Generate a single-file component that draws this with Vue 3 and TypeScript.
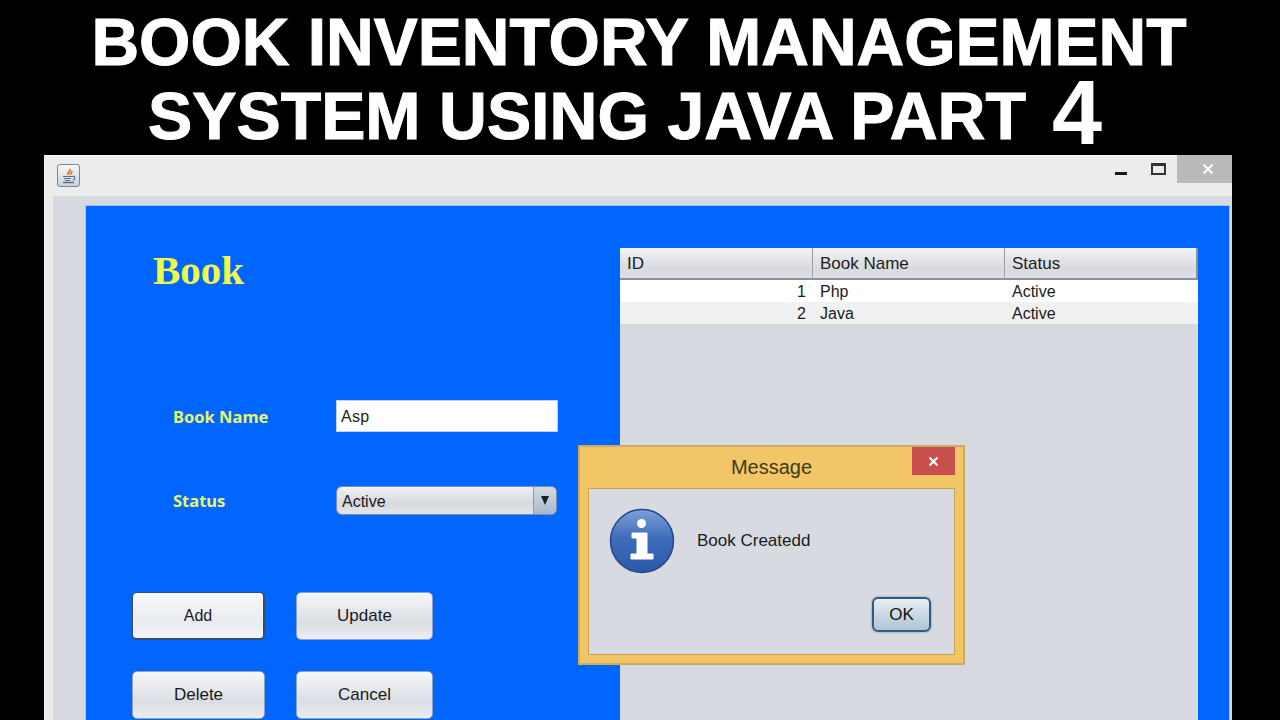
<script setup lang="ts">
const rows = [
  { id: 1, name: 'Php', status: 'Active' },
  { id: 2, name: 'Java', status: 'Active' },
]
const buttons = [
  { label: 'Add', cls: 'btn-focus' },
  { label: 'Update', cls: '' },
  { label: 'Delete', cls: '' },
  { label: 'Cancel', cls: '' },
]
</script>

<template>
  <div class="page">
    <header class="headline">
      <div class="line1">BOOK INVENTORY MANAGEMENT</div>
      <div class="line2"><span>SYSTEM USING JAVA PART</span><span class="four">4</span></div>
    </header>

    <section class="window">
      <div class="titlebar">
        <div class="appicon">
          <svg width="20" height="20" viewBox="0 0 20 20">
            <path d="M11 3c1 2-3 3-2 6 M13 5c0 2-2 2-1.5 4" fill="none" stroke="#e8761e" stroke-width="1.8" />
            <path d="M4 10.500h9 M5 12.500h7 M6 14.500h5" stroke="#5a6f8c" stroke-width="1.200" fill="none" />
            <path d="M13 10.500c3-1 4 2 1 4" stroke="#5a6f8c" stroke-width="1.200" fill="none" />
            <path d="M4 16.500h11" stroke="#5a6f8c" stroke-width="1.400" />
          </svg>
        </div>
        <div class="winctl">
          <span class="min"></span>
          <span class="max"></span>
          <span class="close">
            <svg width="12" height="12" viewBox="0 0 12 12"><path d="M1.500 1.500l9 9M10.500 1.500l-9 9" stroke="#fff" stroke-width="1.800" /></svg>
          </span>
        </div>
      </div>

      <div class="client">
        <div class="panel">
          <div class="form">
            <h1 class="title">Book</h1>
            <div class="field field-name">
              <label>Book Name</label>
              <div class="input">Asp</div>
            </div>
            <div class="field field-status">
              <label>Status</label>
              <div class="select">
                <span class="sel-val">Active</span>
                <span class="sel-btn"><i class="tri"></i></span>
              </div>
            </div>
            <div class="buttons">
              <button v-for="b in buttons" :key="b.label" class="btn" :class="b.cls">{{ b.label }}</button>
            </div>
          </div>

          <div class="tablewrap">
            <div class="thead">
              <div class="th">ID</div>
              <div class="th">Book Name</div>
              <div class="th">Status</div>
            </div>
            <div v-for="(r, i) in rows" :key="r.id" class="tr" :class="{ alt: i === 1 }">
              <div class="td num">{{ r.id }}</div>
              <div class="td">{{ r.name }}</div>
              <div class="td">{{ r.status }}</div>
            </div>
          </div>
        </div>
      </div>
    </section>

    <div class="dialog">
      <div class="dlg-title">
        <span class="dlg-text">Message</span>
        <span class="dlg-close">
          <svg width="11" height="11" viewBox="0 0 11 11"><path d="M1.500 1.500l8 8M9.500 1.500l-8 8" stroke="#fff" stroke-width="1.900" /></svg>
        </span>
      </div>
      <div class="dlg-body">
        <div class="dlg-main">
          <svg class="info" width="66" height="66" viewBox="0 0 66 66">
            <defs>
              <linearGradient id="infog" x1="0" y1="0" x2="0" y2="1">
                <stop offset="0" stop-color="#7f9fd6" />
                <stop offset="0.45" stop-color="#3f6dbb" />
                <stop offset="1" stop-color="#2b58a8" />
              </linearGradient>
            </defs>
            <circle cx="33" cy="33" r="31.500" fill="url(#infog)" stroke="#24478c" stroke-width="1.500" />
            <circle cx="32.500" cy="15.500" r="4.500" fill="#fff" />
            <path d="M23 25h15v21h6v5H22v-5h6V30h-5z" fill="#fff" stroke="#fff" stroke-width="1" stroke-linejoin="round" />
          </svg>
          <span class="dlg-msg">Book Createdd</span>
        </div>
        <div class="dlg-actions">
          <button class="ok">OK</button>
        </div>
      </div>
    </div>
  </div>
</template>

<style>
html, body { margin: 0; background: #000; }
</style>

<style scoped>
.page {
  position: relative;
  width: 1280px;
  height: 720px;
  overflow: hidden;
  background: #000;
  font-family: "Liberation Sans", Arial, sans-serif;
}
.headline {
  height: 155px;
  color: #fff;
  font-weight: 700;
  box-sizing: border-box;
}
.line1 {
  height: 83px;
  padding-top: 6px;
  box-sizing: border-box;
  font-size: 66px;
  line-height: 72px;
  text-align: center;
  margin-left: -2px;
  white-space: nowrap;
  -webkit-text-stroke: 1px #fff;
}
.line2 {
  display: flex;
  align-items: center;
  height: 66px;
  padding-left: 148px;
  font-size: 66.300px;
  line-height: 66px;
  white-space: nowrap;
  -webkit-text-stroke: 1px #fff;
}
.four {
  font-size: 90px;
  margin-left: 26px;
  margin-bottom: 6px;
  -webkit-text-stroke: 0;
}
.window {
  margin-left: 44px;
  width: 1188px;
  height: 565px;
  background: #ececec;
  display: flex;
  flex-direction: column;
  box-shadow: inset 0 1px 0 #f7f7f7;
}
.titlebar {
  height: 41px;
  flex: none;
  display: flex;
  justify-content: space-between;
  align-items: flex-start;
}
.appicon {
  margin: 9px 0 0 13px;
  width: 21px;
  height: 21px;
  border: 1px solid #7d8791;
  border-radius: 3px;
  background: linear-gradient(#f6f8fa, #c9d2dc);
  display: flex;
  align-items: center;
  justify-content: center;
}
.winctl {
  display: flex;
  align-items: flex-start;
}
.min {
  width: 12px;
  height: 3px;
  background: #1a1a1a;
  margin: 17px 24px 0 0;
}
.max {
  width: 11px;
  height: 7px;
  border: 2px solid #333;
  border-top-width: 3px;
  margin: 8px 11px 0 0;
}
.close {
  width: 55px;
  height: 28px;
  box-sizing: border-box;
  padding-left: 6px;
  background: #b9b9b9;
  display: flex;
  align-items: center;
  justify-content: center;
}
.client {
  flex: 1;
  margin-left: 9px;
  background: #d6d9df;
  padding: 10px 3px 0 33px;
  min-height: 0;
}
.panel {
  height: 100%;
  background: #0066ff;
  display: flex;
  box-shadow: 0 0 0 1px #9cc2f2;
}
.form {
  width: 534px;
  flex: none;
  box-sizing: border-box;
  padding: 0 0 0 46px;
}
.title {
  margin: 43px 0 0 21px;
  font-family: "Liberation Serif", "Times New Roman", serif;
  font-weight: 700;
  font-size: 41px;
  line-height: 42px;
  color: #f0fa48;
}
.field {
  display: flex;
  align-items: center;
  padding-left: 41px;
}
.field label {
  width: 163px;
  font-family: "Noto Sans", sans-serif;
  font-weight: 700;
  font-size: 16.500px;
  color: #e9f765;
}
.field-name { margin-top: 109px; }
.field-status { margin-top: 54px; }
.input {
  width: 222px;
  height: 32px;
  box-sizing: border-box;
  background: #fff;
  border: 1px solid #c5cfdf;
  padding-left: 4px;
  font-size: 16px;
  line-height: 32px;
  letter-spacing: 0.300px;
  color: #222;
}
.select {
  width: 221px;
  height: 29px;
  box-sizing: border-box;
  border: 1px solid #7c8ea6;
  border-radius: 6px;
  background: linear-gradient(#f0f2f5, #d5d8de 60%, #e4e6ea);
  display: flex;
  justify-content: space-between;
  overflow: hidden;
}
.sel-val {
  padding-left: 5px;
  font-size: 16px;
  line-height: 29px;
  color: #1a1a1a;
}
.sel-btn {
  width: 22px;
  border-left: 1px solid #8d9db2;
  background: linear-gradient(#d3dbe5, #a7b8cb);
  display: flex;
  align-items: center;
  justify-content: center;
}
.tri {
  width: 0;
  height: 0;
  border-left: 4.500px solid transparent;
  border-right: 4.500px solid transparent;
  border-top: 9px solid #15202c;
}
.buttons {
  margin-top: 77px;
  display: grid;
  grid-template-columns: 133px 137px;
  column-gap: 31px;
  row-gap: 31px;
}
.btn {
  height: 48px;
  padding: 0;
  border: 1px solid #8ba3c2;
  border-radius: 5px;
  background: linear-gradient(#f6f7f9, #dadde3 65%, #eceef2);
  font-family: "Liberation Sans", Arial, sans-serif;
  font-size: 17px;
  color: #1a1a1a;
}
.btn-focus {
  border-color: #35506f;
  border-width: 1px 2px 2px 1px;
  background: linear-gradient(#f8f9fb, #e8ebf1 65%, #f4f5f8);
  font-size: 16px;
}
.tablewrap {
  margin-top: 42px;
  width: 578px;
  height: 530px;
  background: #d6d9df;
  box-sizing: border-box;
}
.thead, .tr {
  display: grid;
  grid-template-columns: 193px 192px 1fr;
}
.thead {
  height: 32px;
  box-sizing: border-box;
  border-bottom: 2px solid #8c8f96;
  border-right: 2px solid #8c8f96;
  background: linear-gradient(#f2f3f5, #d8dae0 70%, #dfe1e6);
}
.th {
  padding-left: 7px;
  font-size: 17px;
  line-height: 31px;
  color: #222;
  border-right: 1px solid #9a9da5;
}
.th:last-child { border-right: none; }
.tr {
  height: 22px;
  background: #fff;
}
.tr.alt { background: #f1f1f2; }
.td {
  padding-left: 7px;
  font-size: 16px;
  line-height: 23px;
  color: #1a1a1a;
}
.td.num {
  text-align: right;
  padding: 0 7px 0 0;
}
.dialog {
  position: absolute;
  left: 578px;
  top: 445px;
  width: 387px;
  height: 220px;
  box-sizing: border-box;
  background: #f2c666;
  border: 2px solid #cdab60;
  padding: 0 8px 8px;
  display: flex;
  flex-direction: column;
}
.dlg-title {
  height: 41px;
  flex: none;
  display: flex;
  justify-content: center;
  position: relative;
}
.dlg-text {
  font-size: 20px;
  line-height: 41px;
  color: #3c3a22;
}
.dlg-close {
  position: absolute;
  right: 0;
  top: 0;
  width: 43px;
  height: 28px;
  background: #c9504f;
  display: flex;
  align-items: center;
  justify-content: center;
}
.dlg-body {
  flex: 1;
  background: #d7dae0;
  border: 1px solid #c9a34e;
  display: flex;
  flex-direction: column;
  justify-content: space-between;
}
.dlg-main {
  display: flex;
  align-items: center;
  padding: 19px 0 0 20px;
}
.info { flex: none; }
.dlg-msg {
  margin-left: 22px;
  margin-top: -1px;
  font-size: 17px;
  color: #1a1a1a;
}
.dlg-actions {
  display: flex;
  justify-content: flex-end;
  padding: 0 23px 22px 0;
}
.ok {
  width: 59px;
  height: 35px;
  padding: 0;
  border: 2px solid #345a80;
  border-radius: 6px;
  background: linear-gradient(#e9eff4, #aec3d4);
  font-family: "Liberation Sans", Arial, sans-serif;
  font-size: 17px;
  color: #111;
  box-shadow: 0 0 2px #4d7ca8;
}
</style>
